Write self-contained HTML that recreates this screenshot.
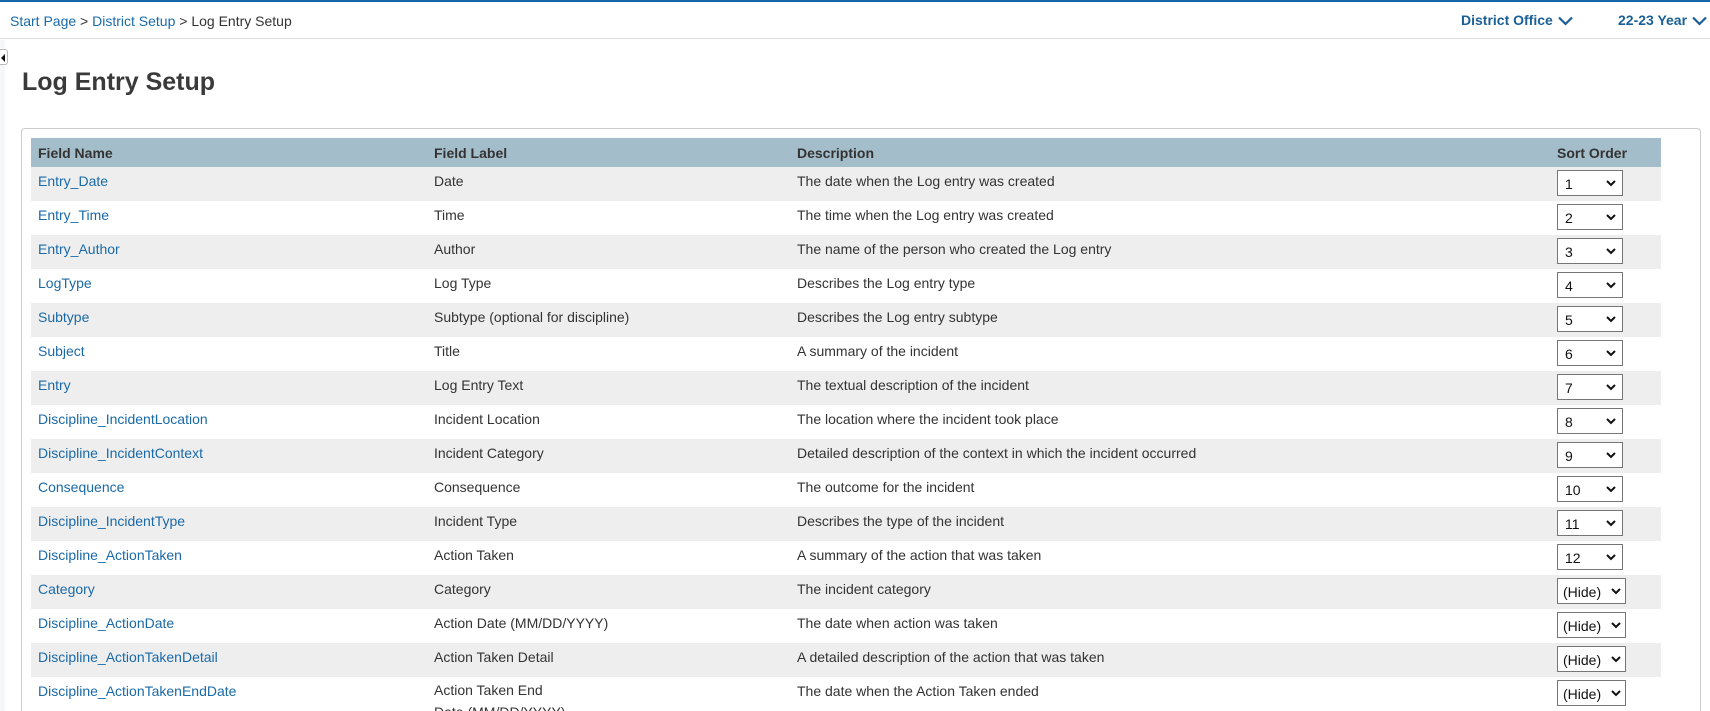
<!DOCTYPE html>
<html style="height:711px;overflow:hidden"><head><meta charset="utf-8"><style>
*{box-sizing:border-box}
body{margin:0;width:1710px;height:711px;overflow:hidden;background:#fff;font-family:"Liberation Sans",Arial,sans-serif;font-size:14px;color:#333;border-top:2px solid #1565a8;position:relative}
.top{height:37px;border-bottom:1px solid #ddd;position:relative}
.bc{position:absolute;left:10px;top:11px;font-size:14px;color:#333}
.bc a{color:#1a6aa8;text-decoration:none}
.dd{position:absolute;top:10px;font-weight:bold;color:#1a5f96;font-size:14px}
.dd svg{vertical-align:-1px;margin-left:5px}
.tog{position:absolute;left:0;top:47px;width:8px;height:16px;border:1px solid #bbb;border-left:none;background:#fff;border-radius:0 3px 3px 0}
.tog:after{content:"";position:absolute;left:1px;top:4px;border:4px solid transparent;border-right:4px solid #111;border-left:none}
.side{position:absolute;left:0;top:38px;width:5px;height:671px;background:#f5f7f8}
h1{position:absolute;left:22px;top:66px;margin:0;font-size:25px;font-weight:bold;color:#3a3a3a}
.box{position:absolute;left:21px;top:126px;width:1680px;height:583px;border:1px solid #ccc;border-bottom:none;border-radius:4px 4px 0 0;overflow:hidden}
table{position:absolute;left:9px;top:9px;width:1630px;border-collapse:collapse}
th{background:#a3bdca;text-align:left;height:29px;padding:0 0 0 7px;font-weight:bold;color:#333}
td{height:34px;padding:0 0 0 7px;vertical-align:top;padding-top:6px}
tr:nth-child(even) td{background:#eee}
td:first-child{color:#1a6aa8}
.sel{display:inline-block;width:66px;height:26px;border:1px solid #767676;background:#fff;margin-top:-3px;position:relative;padding:5px 0 0 7px;font-size:14px;color:#111}
.sel svg{position:absolute;right:6px;top:9px}
</style></head><body>
<div class="top">
<div class="bc"><a>Start Page</a> &gt; <a>District Setup</a> &gt; Log Entry Setup</div>
<div class="dd" style="left:1461px">District Office<svg width="15" height="10" viewBox="0 0 15 10"><path d="M1 1.5L7.5 8L14 1.5" fill="none" stroke="#1a5f96" stroke-width="2.2"/></svg></div>
<div class="dd" style="left:1618px">22-23 Year<svg width="15" height="10" viewBox="0 0 15 10"><path d="M1 1.5L7.5 8L14 1.5" fill="none" stroke="#1a5f96" stroke-width="2.2"/></svg></div>
</div>
<div class="side"></div>
<div class="tog"></div>
<h1>Log Entry Setup</h1>
<div class="box">
<table>
<colgroup><col style="width:396px"><col style="width:363px"><col style="width:760px"><col></colgroup>
<tr><th>Field Name</th><th>Field Label</th><th>Description</th><th>Sort Order</th></tr>
<tr><td>Entry_Date</td><td>Date</td><td>The date when the Log entry was created</td><td><span class="sel">1<svg width="10" height="7"><path d="M1 1L5 5L9 1" fill="none" stroke="#111" stroke-width="2"/></svg></span></td></tr>
<tr><td>Entry_Time</td><td>Time</td><td>The time when the Log entry was created</td><td><span class="sel">2<svg width="10" height="7"><path d="M1 1L5 5L9 1" fill="none" stroke="#111" stroke-width="2"/></svg></span></td></tr>
<tr><td>Entry_Author</td><td>Author</td><td>The name of the person who created the Log entry</td><td><span class="sel">3<svg width="10" height="7"><path d="M1 1L5 5L9 1" fill="none" stroke="#111" stroke-width="2"/></svg></span></td></tr>
<tr><td>LogType</td><td>Log Type</td><td>Describes the Log entry type</td><td><span class="sel">4<svg width="10" height="7"><path d="M1 1L5 5L9 1" fill="none" stroke="#111" stroke-width="2"/></svg></span></td></tr>
<tr><td>Subtype</td><td>Subtype (optional for discipline)</td><td>Describes the Log entry subtype</td><td><span class="sel">5<svg width="10" height="7"><path d="M1 1L5 5L9 1" fill="none" stroke="#111" stroke-width="2"/></svg></span></td></tr>
<tr><td>Subject</td><td>Title</td><td>A summary of the incident</td><td><span class="sel">6<svg width="10" height="7"><path d="M1 1L5 5L9 1" fill="none" stroke="#111" stroke-width="2"/></svg></span></td></tr>
<tr><td>Entry</td><td>Log Entry Text</td><td>The textual description of the incident</td><td><span class="sel">7<svg width="10" height="7"><path d="M1 1L5 5L9 1" fill="none" stroke="#111" stroke-width="2"/></svg></span></td></tr>
<tr><td>Discipline_IncidentLocation</td><td>Incident Location</td><td>The location where the incident took place</td><td><span class="sel">8<svg width="10" height="7"><path d="M1 1L5 5L9 1" fill="none" stroke="#111" stroke-width="2"/></svg></span></td></tr>
<tr><td>Discipline_IncidentContext</td><td>Incident Category</td><td>Detailed description of the context in which the incident occurred</td><td><span class="sel">9<svg width="10" height="7"><path d="M1 1L5 5L9 1" fill="none" stroke="#111" stroke-width="2"/></svg></span></td></tr>
<tr><td>Consequence</td><td>Consequence</td><td>The outcome for the incident</td><td><span class="sel">10<svg width="10" height="7"><path d="M1 1L5 5L9 1" fill="none" stroke="#111" stroke-width="2"/></svg></span></td></tr>
<tr><td>Discipline_IncidentType</td><td>Incident Type</td><td>Describes the type of the incident</td><td><span class="sel">11<svg width="10" height="7"><path d="M1 1L5 5L9 1" fill="none" stroke="#111" stroke-width="2"/></svg></span></td></tr>
<tr><td>Discipline_ActionTaken</td><td>Action Taken</td><td>A summary of the action that was taken</td><td><span class="sel">12<svg width="10" height="7"><path d="M1 1L5 5L9 1" fill="none" stroke="#111" stroke-width="2"/></svg></span></td></tr>
<tr><td>Category</td><td>Category</td><td>The incident category</td><td><span class="sel" style="width:69px;padding-left:5px">(Hide)<svg width="10" height="7" style="right:4px"><path d="M1 1L5 5L9 1" fill="none" stroke="#111" stroke-width="2"/></svg></span></td></tr>
<tr><td>Discipline_ActionDate</td><td>Action Date (MM/DD/YYYY)</td><td>The date when action was taken</td><td><span class="sel" style="width:69px;padding-left:5px">(Hide)<svg width="10" height="7" style="right:4px"><path d="M1 1L5 5L9 1" fill="none" stroke="#111" stroke-width="2"/></svg></span></td></tr>
<tr><td>Discipline_ActionTakenDetail</td><td>Action Taken Detail</td><td>A detailed description of the action that was taken</td><td><span class="sel" style="width:69px;padding-left:5px">(Hide)<svg width="10" height="7" style="right:4px"><path d="M1 1L5 5L9 1" fill="none" stroke="#111" stroke-width="2"/></svg></span></td></tr>
<tr><td>Discipline_ActionTakenEndDate</td><td style="line-height:22px;padding-top:2px">Action Taken End<br>Date (MM/DD/YYYY)</td><td>The date when the Action Taken ended</td><td><span class="sel" style="width:69px;padding-left:5px">(Hide)<svg width="10" height="7" style="right:4px"><path d="M1 1L5 5L9 1" fill="none" stroke="#111" stroke-width="2"/></svg></span></td></tr>
</table>
</div>
</body></html>
